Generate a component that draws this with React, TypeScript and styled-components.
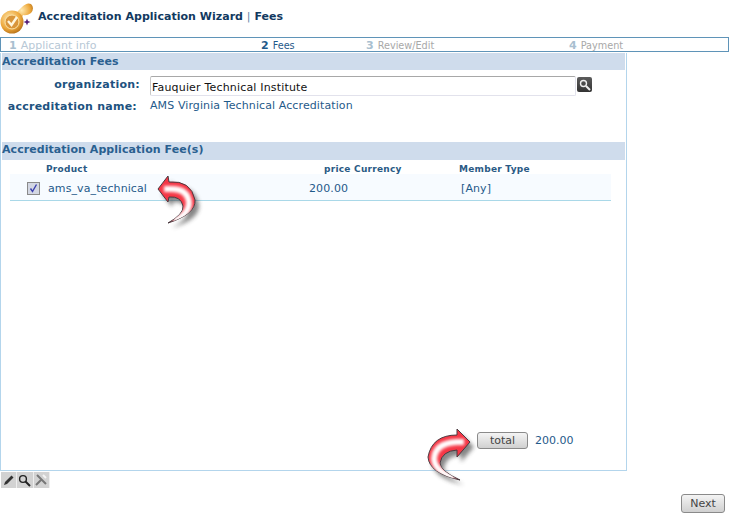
import styled, { createGlobalStyle } from 'styled-components';

const GlobalStyle = createGlobalStyle`
  html, body {
    margin: 0;
    padding: 0;
    background: #ffffff;
  }
  body {
    font-family: Verdana, "DejaVu Sans", sans-serif;
    font-size: 11px;
    color: #1f5a8a;
  }
`;

const Page = styled.div`
  position: relative;
  width: 729px;
  height: 513px;
  overflow: hidden;
`;

const Header = styled.header`
  display: flex;
  align-items: center;
  height: 37px;
  gap: 2px;
`;

const Title = styled.h1`
  margin: 0 0 5px;
  font-size: 11px;
  font-weight: bold;
  letter-spacing: 0.03px;
  color: #12395f;
`;

const TitleBar = styled.span`
  color: #5f86a8;
  font-weight: normal;
`;

const Steps = styled.nav`
  display: grid;
  grid-template-columns: 252px 105px 203px 1fr;
  align-items: center;
  box-sizing: border-box;
  height: 15px;
  padding: 1px 0 0 8px;
  border: 1px solid #5f94b8;
`;

const Step = styled.div`
  display: flex;
  align-items: baseline;
  gap: 4px;
`;

const StepNumber = styled.b<{ $active?: boolean }>`
  font-size: 11px;
  color: ${(p) => (p.$active ? '#1f5a8a' : '#a9bfd0')};
`;

const StepLabel = styled.span<{ $active?: boolean }>`
  font-size: 9.7px;
  color: ${(p) => (p.$active ? '#1f5a8a' : '#a8a8a8')};
`;

const FirstStepLabel = styled.span`
  font-size: 11px;
  color: #b7c8d6;
`;

const Panel = styled.main`
  display: flex;
  flex-direction: column;
  box-sizing: border-box;
  width: 627px;
  height: 418px;
  margin-top: 1px;
  padding-left: 1px;
  border: 1px solid #b3d5ec;
  border-top-width: 0;
`;

const SectionBar = styled.h2<{ $height: number; $gap?: number; $lift?: number }>`
  display: flex;
  align-items: center;
  flex: none;
  box-sizing: border-box;
  height: ${(p) => p.$height}px;
  margin: ${(p) => p.$gap ?? 0}px 1px 0 0;
  padding-bottom: ${(p) => p.$lift ?? 0}px;
  font-size: 11px;
  font-weight: bold;
  letter-spacing: 0.06px;
  color: #2a6090;
  background: #cfdcec;
`;

const OrganizationRow = styled.div`
  display: flex;
  align-items: flex-start;
  box-sizing: border-box;
  height: 28px;
  padding-top: 6px;
`;

const NameRow = styled.div`
  display: flex;
  align-items: center;
  height: 14px;
`;

const FieldLabel = styled.label<{ $inset: number; $drop: number }>`
  box-sizing: border-box;
  width: 139px;
  padding: ${(p) => p.$drop}px ${(p) => p.$inset}px 0 0;
  line-height: 16px;
  text-align: right;
  font-weight: bold;
  letter-spacing: 0.25px;
  color: #20527f;
  white-space: nowrap;
`;

const FieldValue = styled.div`
  margin-left: 9px;
  letter-spacing: 0.1px;
  white-space: nowrap;
`;

const TextInput = styled.input`
  box-sizing: border-box;
  width: 426px;
  height: 20px;
  margin-left: 9px;
  padding: 2px 1px 0;
  border: 1px solid #e2e2ec;
  border-top-color: #a8a8a8;
  border-left-color: #c8c8c8;
  border-radius: 2px;
  font: 11px Verdana, "DejaVu Sans", sans-serif;
  letter-spacing: 0.18px;
  color: #111111;
`;

const SearchButton = styled.div`
  display: flex;
  align-items: center;
  justify-content: center;
  width: 15px;
  height: 15px;
  margin: 1px 0 0 1px;
  background: linear-gradient(#5c5c5c, #333333);
  border-radius: 2px;
`;

const Table = styled.div`
  margin: 0 15px 0 8px;
`;

const columns = '36px 278px 135px 1fr';

const TableHead = styled.div`
  display: grid;
  grid-template-columns: ${columns};
  align-items: center;
  box-sizing: border-box;
  height: 14px;
  padding-top: 4px;
  font-size: 9px;
  font-weight: bold;
  letter-spacing: 0.25px;
  color: #2a5a85;
`;

const TableRow = styled.div`
  display: grid;
  grid-template-columns: ${columns};
  align-items: center;
  box-sizing: border-box;
  height: 27px;
  padding-top: 2px;
  letter-spacing: 0.1px;
  background: #f7fbff;
  border-bottom: 1px solid #a9d8e8;
`;

const CheckCell = styled.div`
  display: flex;
  justify-content: center;
  padding-left: 11px;
`;

const Checkbox = styled.div`
  display: flex;
  align-items: center;
  justify-content: center;
  box-sizing: border-box;
  width: 13px;
  height: 13px;
  background: #d3d7e3;
  border: 1px solid #8a8a8a;
`;

const ProductCell = styled.div`
  padding-left: 2px;
`;

const PriceHead = styled.div`
  white-space: nowrap;
`;

const PriceCell = styled.div`
  margin-left: -15px;
`;

const MemberCell = styled.div`
  margin-left: 2px;
`;

const TotalRow = styled.div`
  display: flex;
  align-items: flex-start;
  gap: 7px;
  margin-top: auto;
  height: 38px;
  padding-left: 475px;
`;

const TotalValue = styled.span`
  line-height: 17px;
`;

const GreyButton = styled.div<{ $width: number; $height: number }>`
  display: flex;
  align-items: center;
  justify-content: center;
  box-sizing: border-box;
  width: ${(p) => p.$width}px;
  height: ${(p) => p.$height}px;
  color: #444444;
  background: linear-gradient(#f4f4f4, #d0d0d0);
  border: 1px solid #8a8a8a;
  border-radius: 3px;
`;

const Toolbar = styled.div`
  display: flex;
  width: 49px;
  margin: 1px 0 0 1px;
  height: 16px;
  background: #d2d2d2;
`;

const ToolIcon = styled.div`
  display: flex;
  align-items: center;
  justify-content: center;
  width: 16px;
  height: 16px;
  border-right: 1px solid #eeeeee;
`;

const Footer = styled.footer`
  display: flex;
  justify-content: flex-end;
  margin-top: 6px;
  padding-right: 4px;
`;

const ArrowOverlay = styled.svg<{ $left: number; $top: number }>`
  position: absolute;
  left: ${(p) => p.$left}px;
  top: ${(p) => p.$top}px;
  overflow: visible;
`;

function Logo() {
  return (
    <svg width="36" height="32" viewBox="0 0 36 32">
      <defs>
        <radialGradient id="gold" cx="0.4" cy="0.35" r="0.75">
          <stop offset="0" stopColor="#ffe9b0" />
          <stop offset="0.6" stopColor="#eda83c" />
          <stop offset="1" stopColor="#a8620e" />
        </radialGradient>
      </defs>
      <path d="M14 12 L22 4 Q27 -1 31 1 Q35 5 31 10 Q27 13 23 12 L20 20 Z" fill="url(#gold)" />
      <circle cx="12" cy="19" r="11.5" fill="url(#gold)" />
      <circle cx="12" cy="19" r="7" fill="#d9953a" stroke="#fbe3a8" strokeWidth="1" />
      <path d="M8 18 L11.5 22 L17 14" fill="none" stroke="#fff6dc" strokeWidth="2.4" />
      <path d="M27 15.5 L28 18 L30.5 19 L28 20 L27 22.5 L26 20 L23.5 19 L26 18 Z" fill="#55207a" />
    </svg>
  );
}

function CurvedArrow({ id, d, spine }: { id: string; d: string; spine: string }) {
  return (
    <>
      <defs>
        <filter id={`${id}Blur`} x="-30%" y="-30%" width="170%" height="170%">
          <feGaussianBlur stdDeviation="2" />
        </filter>
        <filter id={`${id}Glow`} x="-30%" y="-30%" width="170%" height="170%">
          <feGaussianBlur stdDeviation="1.6" />
        </filter>
        <clipPath id={`${id}Clip`}>
          <path d={d} />
        </clipPath>
      </defs>
      <path d={d} fill="#444444" opacity="0.65" transform="translate(4 5)" filter={`url(#${id}Blur)`} />
      <path d={d} fill="#f53645" stroke="#4a3a40" strokeWidth="1" />
      <g clipPath={`url(#${id}Clip)`}>
        <path d={spine} fill="none" stroke="#ffffff" strokeWidth="6" filter={`url(#${id}Glow)`} />
      </g>
    </>
  );
}

export default function App() {
  return (
    <Page>
      <GlobalStyle />
      <Header>
        <Logo />
        <Title>
          Accreditation Application Wizard <TitleBar>|</TitleBar> Fees
        </Title>
      </Header>
      <Steps>
        <Step>
          <StepNumber>1</StepNumber>
          <FirstStepLabel>Applicant info</FirstStepLabel>
        </Step>
        <Step>
          <StepNumber $active>2</StepNumber>
          <StepLabel $active>Fees</StepLabel>
        </Step>
        <Step>
          <StepNumber>3</StepNumber>
          <StepLabel>Review/Edit</StepLabel>
        </Step>
        <Step>
          <StepNumber>4</StepNumber>
          <StepLabel>Payment</StepLabel>
        </Step>
      </Steps>
      <Panel>
        <SectionBar $height={17}>Accreditation Fees</SectionBar>
        <OrganizationRow>
          <FieldLabel $inset={1} $drop={1}>organization:</FieldLabel>
          <TextInput readOnly value="Fauquier Technical Institute" />
          <SearchButton>
            <svg width="12" height="12" viewBox="0 0 12 12">
              <circle cx="4.5" cy="4.5" r="3" fill="none" stroke="#eeeeee" strokeWidth="1.4" />
              <path d="M7 7 L11 11" stroke="#eeeeee" strokeWidth="2" />
            </svg>
          </SearchButton>
        </OrganizationRow>
        <NameRow>
          <FieldLabel $inset={4} $drop={4}>accreditation name:</FieldLabel>
          <FieldValue>AMS Virginia Technical Accreditation</FieldValue>
        </NameRow>
        <SectionBar $height={18} $gap={30} $lift={4}>Accreditation Application Fee(s)</SectionBar>
        <Table>
          <TableHead>
            <span />
            <span>Product</span>
            <PriceHead>price Currency</PriceHead>
            <span>Member Type</span>
          </TableHead>
          <TableRow>
            <CheckCell>
              <Checkbox>
                <svg width="9" height="9" viewBox="0 0 9 9">
                  <path d="M1.5 4.5 L3.5 7.5 L7.5 0.5" fill="none" stroke="#3a3fae" strokeWidth="1.4" />
                </svg>
              </Checkbox>
            </CheckCell>
            <ProductCell>ams_va_technical</ProductCell>
            <PriceCell>200.00</PriceCell>
            <MemberCell>[Any]</MemberCell>
          </TableRow>
        </Table>
        <TotalRow>
          <GreyButton $width={51} $height={17}>total</GreyButton>
          <TotalValue>200.00</TotalValue>
        </TotalRow>
      </Panel>
      <Toolbar>
        <ToolIcon>
          <svg width="12" height="12" viewBox="0 0 12 12">
            <path d="M1 11 L2 8 L8.5 1.5 L10.5 3.5 L4 10 Z" fill="#333333" />
          </svg>
        </ToolIcon>
        <ToolIcon>
          <svg width="13" height="13" viewBox="0 0 13 13">
            <circle cx="5" cy="5" r="3.4" fill="none" stroke="#222222" strokeWidth="1.4" />
            <path d="M7.5 7.5 L12 12" stroke="#222222" strokeWidth="2" />
          </svg>
        </ToolIcon>
        <ToolIcon>
          <svg width="12" height="12" viewBox="0 0 12 12">
            <path d="M1 11 L7 5 M2 1 L11 10" stroke="#777777" strokeWidth="2" />
            <path d="M8 1 L11 4" stroke="#f4f4f4" strokeWidth="2" />
          </svg>
        </ToolIcon>
      </Toolbar>
      <Footer>
        <GreyButton $width={44} $height={19}>Next</GreyButton>
      </Footer>
      <ArrowOverlay $left={158} $top={176} width="40" height="50" viewBox="0 0 40 50">
        <CurvedArrow
          id="arrowA"
          d="M0 13 L10 0 L11 6 Q33 4 37 24 Q38 38 10 47 Q26 38 25 30 Q23 20 11 21 L10 26 Z"
          spine="M6 13 L11 13 Q30 12 31 27 Q31 38 16 45"
        />
      </ArrowOverlay>
      <ArrowOverlay $left={428} $top={429} width="44" height="52" viewBox="0 0 44 52">
        <CurvedArrow
          id="arrowB"
          d="M42 13 L29 0 L29 6 Q4 6 0 28 Q1 44 32 51 Q12 42 12 34 Q14 22 29 21 L29 28 Z"
          spine="M36 13 L29 13 Q7 14 6 30 Q7 42 26 49"
        />
      </ArrowOverlay>
    </Page>
  );
}
